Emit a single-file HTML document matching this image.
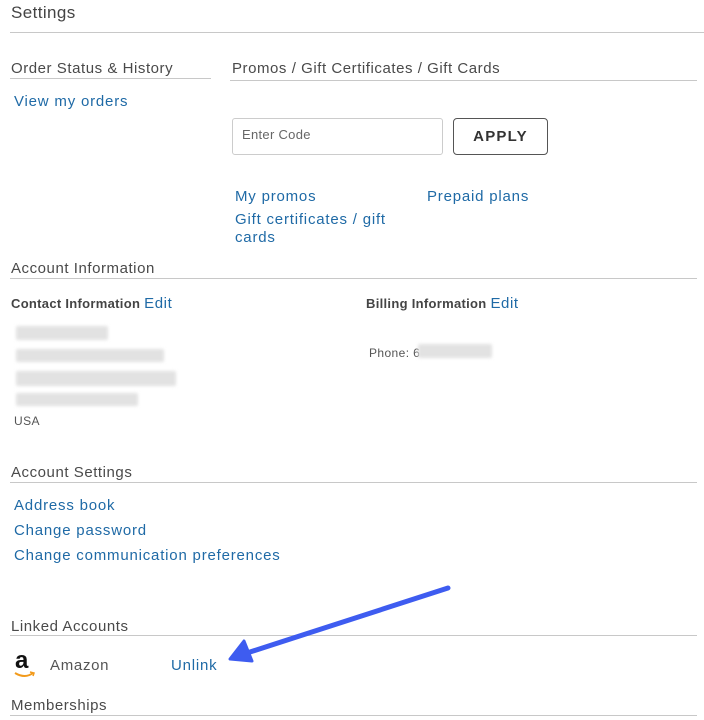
<!DOCTYPE html><html><head><style>
body{margin:0;width:704px;height:720px;background:#fff;font-family:"Liberation Sans",sans-serif;position:relative;overflow:hidden;color:#444}
.a{position:absolute;white-space:nowrap}
.h{font-size:15px;color:#4a4a4a;letter-spacing:0.55px}
.l{font-size:15px;color:#1f6aa6;letter-spacing:0.8px}
.ln{position:absolute;height:1px;background:#c8c8c8}
.b{position:absolute;background:#e2e2e2;border-radius:2px;filter:blur(1.5px)}
.s{font-size:12px;color:#555;letter-spacing:0.4px}
</style></head><body>
<div class="a" style="left:11px;top:3px;font-size:17px;color:#444;letter-spacing:0.4px">Settings</div>
<div class="ln" style="left:10px;top:32px;width:694px"></div>
<div class="a h" style="left:11px;top:60px">Order Status &amp; History</div>
<div class="ln" style="left:10px;top:78px;width:201px"></div>
<div class="a h" style="left:232px;top:60px">Promos / Gift Certificates / Gift Cards</div>
<div class="ln" style="left:230px;top:80px;width:467px"></div>
<div class="a l" style="left:14px;top:93px">View my orders</div>
<div class="a" style="left:232px;top:118px;width:211px;height:37px;border:1px solid #ccc;border-radius:3px;box-sizing:border-box"></div>
<div class="a" style="left:242px;top:127px;font-size:13px;color:#666;letter-spacing:0.3px">Enter Code</div>
<div class="a" style="left:453px;top:118px;width:95px;height:37px;border:1px solid #555;border-radius:4px;box-sizing:border-box;text-align:center;line-height:35px;font-size:15px;font-weight:bold;letter-spacing:1.2px;color:#333">APPLY</div>
<div class="a l" style="left:235px;top:188px">My promos</div>
<div class="a l" style="left:427px;top:188px">Prepaid plans</div>
<div class="a l" style="left:235px;top:211px;line-height:18px">Gift certificates / gift<br>cards</div>
<div class="a h" style="left:11px;top:260px">Account Information</div>
<div class="ln" style="left:10px;top:278px;width:687px"></div>
<div class="a" style="left:11px;top:295px;font-size:13px;font-weight:bold;color:#444;letter-spacing:0.3px">Contact Information <span style="font-weight:normal;font-size:15px;color:#1f6aa6;letter-spacing:0.6px">Edit</span></div>
<div class="a" style="left:366px;top:295px;font-size:13px;font-weight:bold;color:#444;letter-spacing:0.3px">Billing Information <span style="font-weight:normal;font-size:15px;color:#1f6aa6;letter-spacing:0.6px">Edit</span></div>
<div class="b" style="left:16px;top:326px;width:92px;height:14px"></div>
<div class="b" style="left:16px;top:349px;width:148px;height:13px"></div>
<div class="b" style="left:16px;top:371px;width:160px;height:15px"></div>
<div class="b" style="left:16px;top:393px;width:122px;height:13px"></div>
<div class="a s" style="left:14px;top:414px">USA</div>
<div class="a s" style="left:369px;top:346px">Phone: 6</div>
<div class="b" style="left:418px;top:344px;width:74px;height:14px"></div>
<div class="a h" style="left:11px;top:464px">Account Settings</div>
<div class="ln" style="left:10px;top:482px;width:687px"></div>
<div class="a l" style="left:14px;top:497px">Address book</div>
<div class="a l" style="left:14px;top:522px">Change password</div>
<div class="a l" style="left:14px;top:547px">Change communication preferences</div>
<div class="a h" style="left:11px;top:618px">Linked Accounts</div>
<div class="ln" style="left:10px;top:635px;width:687px"></div>
<div class="a" style="left:15px;top:649px;font-size:24px;font-weight:bold;color:#111;line-height:24px">a</div>
<svg class="a" style="left:13px;top:671px" width="24" height="8"><path d="M2 2 Q12 8 20 2" stroke="#f29a1b" stroke-width="2" fill="none"/><path d="M17 1 L21 2 L20 5" stroke="#f29a1b" stroke-width="1.5" fill="none"/></svg>
<div class="a" style="left:50px;top:657px;font-size:15px;color:#555;letter-spacing:0.7px">Amazon</div>
<div class="a l" style="left:171px;top:657px">Unlink</div>
<div class="a h" style="left:11px;top:697px">Memberships</div>
<div class="ln" style="left:10px;top:715px;width:687px"></div>
<svg class="a" style="left:0;top:0" width="704" height="720"><line x1="448" y1="588" x2="250" y2="652" stroke="#3e5cf0" stroke-width="5" stroke-linecap="round"/><polygon points="230,659 244,641 252,661" fill="#3e5cf0" stroke="#3e5cf0" stroke-width="3" stroke-linejoin="round"/></svg>
</body></html>
